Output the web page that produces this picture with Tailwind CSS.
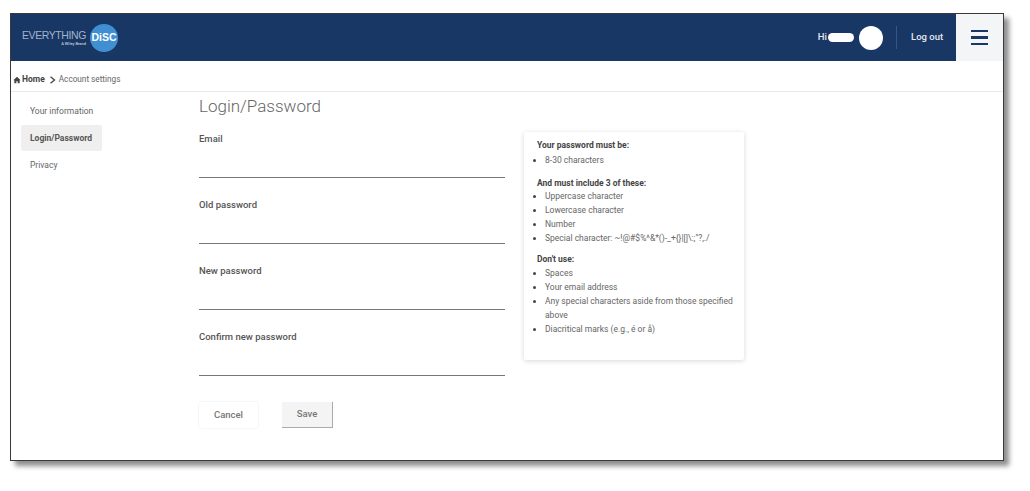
<!DOCTYPE html>
<html lang="en">
<head>
    <meta charset="UTF-8">
    <title>Account settings</title>
    <script src="https://cdn.jsdelivr.net/npm/@tailwindcss/browser@4"></script>
</head>
<body class="bg-white font-['Roboto',sans-serif] h-[491px] w-[1030px] overflow-hidden pl-[10px] pt-[13px]">
    <div class="w-[994px] h-[448px] border-[1.5px] border-[#3a3a3a] bg-white shadow-[5px_5px_5px_rgba(0,0,0,0.45)] flex flex-col">
        <!-- Header -->
        <header class="h-[47px] shrink-0 bg-[#183764] flex items-center">
            <div class="flex items-center pl-[10px]">
                <div class="flex flex-col items-end w-[65px]">
                    <span class="text-[#a3b3ca] text-[10.5px] leading-[12px] tracking-[-0.4px] whitespace-nowrap font-['Liberation_Sans',sans-serif]">EVERYTHING</span>
                    <span class="text-[#c6d0df] text-[4px] leading-[6px] font-medium whitespace-nowrap">A Wiley Brand</span>
                </div>
                <div class="w-[28px] h-[28px] rounded-full bg-[#3f8fd2] flex items-center justify-center text-white text-[10.5px] font-bold ml-[4px] font-['Liberation_Sans',sans-serif]">DiSC</div>
            </div>
            <div class="ml-auto flex items-center h-full">
                <span class="text-[#e4e9f0] text-[9.5px] font-medium mr-[1px]">Hi</span>
                <span class="w-[26px] h-[9px] rounded-full bg-white"></span>
                <span class="w-[24px] h-[24px] rounded-full bg-white ml-[5px]"></span>
                <span class="w-px h-[23px] bg-[#3a5580] ml-[13px]"></span>
                <span class="text-[#e4e9f0] text-[9.5px] font-medium ml-[14px] mr-[13px] w-[32px] whitespace-nowrap">Log out</span>
                <div class="w-[47px] h-full bg-[#f3f5f6] flex flex-col items-center justify-center gap-[4px]">
                    <span class="w-[17px] h-[2.5px] bg-[#183764]"></span>
                    <span class="w-[17px] h-[2.5px] bg-[#183764]"></span>
                    <span class="w-[17px] h-[2.5px] bg-[#183764]"></span>
                </div>
            </div>
        </header>

        <!-- Breadcrumb -->
        <div class="h-[31px] shrink-0 border-b border-[#e9e9e9] flex items-center pl-[2px] pt-[7px] text-[8.5px]">
            <svg class="w-[8px] h-[8px] text-[#444]" viewBox="0 0 24 24" fill="currentColor"><path d="M12 2 1 13h3v9h6v-6h4v6h6v-9h3z"/></svg>
            <span class="ml-[1px] font-bold text-[#444]">Home</span>
            <svg class="w-[7px] h-[8px] ml-[4px] text-[#444]" viewBox="0 0 7 8" fill="none" stroke="currentColor" stroke-width="1.3"><path d="M1.5 .8 5.5 4l-4 3.2"/></svg>
            <span class="ml-[3px] text-[8.2px] text-[#666]">Account settings</span>
        </div>

        <div class="flex flex-1 min-h-0">
            <!-- Sidebar -->
            <nav class="w-[188px] shrink-0 pl-[10px] pt-[5px] text-[8.5px] text-[#666]">
                <div class="w-[81px] h-[28px] pl-[9px] flex items-center">Your information</div>
                <div class="w-[81px] h-[26px] pl-[9px] flex items-center rounded-[2px] bg-[#efefef] font-bold text-[#555]">Login/Password</div>
                <div class="w-[81px] h-[28px] pl-[9px] flex items-center">Privacy</div>
            </nav>

            <!-- Form -->
            <main class="w-[306px] shrink-0">
                <h1 class="text-[17px] leading-[22px] font-light text-[#666] mt-[3px]">Login/Password</h1>
                <div class="mt-[10px] flex flex-col gap-[15px]">
                    <div class="h-[51px] border-b-[1.5px] border-[#777] pt-[5px]"><label class="block text-[9.5px] leading-[14px] font-medium text-[#555]">Email</label></div>
                    <div class="h-[51px] border-b-[1.5px] border-[#777] pt-[5px]"><label class="block text-[9.5px] leading-[14px] font-medium text-[#555]">Old password</label></div>
                    <div class="h-[51px] border-b-[1.5px] border-[#777] pt-[5px]"><label class="block text-[9.5px] leading-[14px] font-medium text-[#555]">New password</label></div>
                    <div class="h-[51px] border-b-[1.5px] border-[#777] pt-[5px]"><label class="block text-[9.5px] leading-[14px] font-medium text-[#555]">Confirm new password</label></div>
                </div>
                <div class="flex gap-[24px] mt-[26px]">
                    <button class="w-[59px] h-[26px] rounded-[2px] bg-white shadow-[0_0_2px_rgba(0,0,0,0.12)] text-[9.5px] font-medium text-[#777]">Cancel</button>
                    <button class="w-[51px] h-[26px] bg-[#f4f4f4] border-r border-b border-[#aaa] text-[9.5px] font-medium text-[#777]">Save</button>
                </div>
            </main>

            <!-- Password rules -->
            <aside class="w-[220px] h-[228px] ml-[19px] mt-[40px] shrink-0 bg-white rounded-[2px] shadow-[0_1px_5px_rgba(0,0,0,0.16)] pl-[13px] pr-[6px] pt-[7px] text-[8.5px] leading-[13.8px] text-[#666]">
                <p class="font-bold text-[#444]">Your password must be:</p>
                <ul class="mt-[1px] pl-[8px] list-disc marker:text-[#444]">
                    <li>8-30 characters</li>
                </ul>
                <p class="font-bold text-[#444] mt-[9px]">And must include 3 of these:</p>
                <ul class="pl-[8px] list-disc marker:text-[#444]">
                    <li>Uppercase character</li>
                    <li>Lowercase character</li>
                    <li>Number</li>
                    <li>Special character: ~!@#$%^&amp;*()-_+{}|[]\:;"?,./</li>
                </ul>
                <p class="font-bold text-[#444] mt-[7px]">Don't use:</p>
                <ul class="mt-[1px] pl-[8px] list-disc marker:text-[#444]">
                    <li>Spaces</li>
                    <li>Your email address</li>
                    <li>Any special characters aside from those specified above</li>
                    <li>Diacritical marks (e.g., é or å)</li>
                </ul>
            </aside>
        </div>
    </div>
</body>
</html>
